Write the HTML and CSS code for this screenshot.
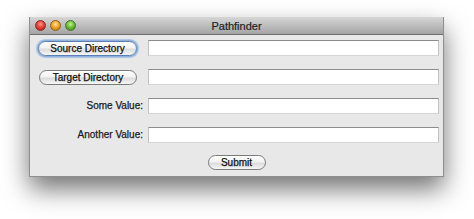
FILE: index.html
```html
<!DOCTYPE html>
<html>
<head>
<meta charset="utf-8">
<link rel="stylesheet" href="styles.css">
</head>
<body>
<div class="window">
  <div class="titlebar">
    <div class="lights">
      <span class="light red"></span>
      <span class="light yellow"></span>
      <span class="light green"></span>
    </div>
    <div class="title">Pathfinder</div>
  </div>
  <div class="content">
    <div class="form">
      <div class="cell"><button class="btn focus">Source Directory</button></div>
      <div class="field"></div>
      <div class="cell"><button class="btn shifted">Target Directory</button></div>
      <div class="field"></div>
      <div class="label">Some Value:</div>
      <div class="field"></div>
      <div class="label">Another Value:</div>
      <div class="field"></div>
    </div>
    <div class="actions"><button class="btn submit">Submit</button></div>
  </div>
</div>
</body>
</html>
```
FILE: styles.css
```css
html, body {
  margin: 0;
  padding: 0;
  background: #ffffff;
}
body {
  font-family: "Liberation Sans", Arial, sans-serif;
  padding: 17px 0 41px 29px;
  min-height: 219px;
  box-sizing: border-box;
}
.window {
  width: 415px;
  box-sizing: border-box;
  border: 1px solid #8e8e8e;
  border-top: none;
  background: #e8e8e8;
  box-shadow: 0 12px 24px rgba(0, 0, 0, 0.55);
}
.titlebar {
  position: relative;
  height: 17px;
  border-bottom: 1px solid #6e6e6e;
  background: linear-gradient(#d6d6d6, #b8b8b8 60%, #a4a4a4);
  display: flex;
  align-items: center;
  justify-content: center;
}
.lights {
  position: absolute;
  left: 5px;
  top: 3px;
  display: flex;
  gap: 4px;
}
.light {
  width: 11px;
  height: 11px;
  border-radius: 50%;
  box-sizing: border-box;
}
.red {
  background: radial-gradient(circle at 50% 35%, #ff9a90 0%, #e3453c 45%, #a81a14 100%);
  border: 1px solid #8c2a24;
}
.yellow {
  background: radial-gradient(circle at 50% 35%, #ffe19a 0%, #f0a72c 45%, #b0690e 100%);
  border: 1px solid #946014;
}
.green {
  background: radial-gradient(circle at 50% 35%, #c9f0a0 0%, #6fbf3c 45%, #3b7f1a 100%);
  border: 1px solid #3f7a22;
}
.title {
  font-size: 11px;
  color: #222;
  line-height: 17px;
  padding-top: 1px;
  -webkit-text-stroke: 0.2px #222;
}
.content {
  padding: 5px 4px 6px 7px;
}
.form {
  display: grid;
  grid-template-columns: 106px 1fr;
  column-gap: 5px;
  row-gap: 13px;
}
.cell {
  display: flex;
  align-items: center;
}
.label {
  font-size: 10px;
  color: #1a1a1a;
  text-align: right;
  line-height: 16px;
  white-space: nowrap;
  -webkit-text-stroke: 0.25px #1a1a1a;
}
.field {
  height: 16px;
  box-sizing: border-box;
  background: #fff;
  border: 1px solid #c2c2c2;
  border-top-color: #8c8c8c;
  border-bottom-color: #d6d6d6;
}
.btn {
  font-family: "Liberation Sans", Arial, sans-serif;
  font-size: 10px;
  color: #111;
  -webkit-text-stroke: 0.25px #111;
  height: 15px;
  padding: 0;
  white-space: nowrap;
  border: 1px solid #7a7a7a;
  border-radius: 8px;
  background: linear-gradient(#ffffff, #f2f2f2 45%, #dcdcdc 55%, #f6f6f6);
  line-height: 13px;
  margin: 0;
  box-sizing: border-box;
}
.btn.focus {
  width: 99px;
  margin-left: 1px;
  box-shadow: 0 0 0 1px #8fb0dc, 0 0 1px 2px #a9c3e6;
  border-color: #5a7fb0;
}
.btn.shifted {
  width: 98px;
  margin-left: 2px;
}
.actions {
  display: flex;
  justify-content: center;
  padding-top: 12px;
  padding-right: 3px;
}
.btn.submit {
  width: 58px;
  height: 15px;
}
```
